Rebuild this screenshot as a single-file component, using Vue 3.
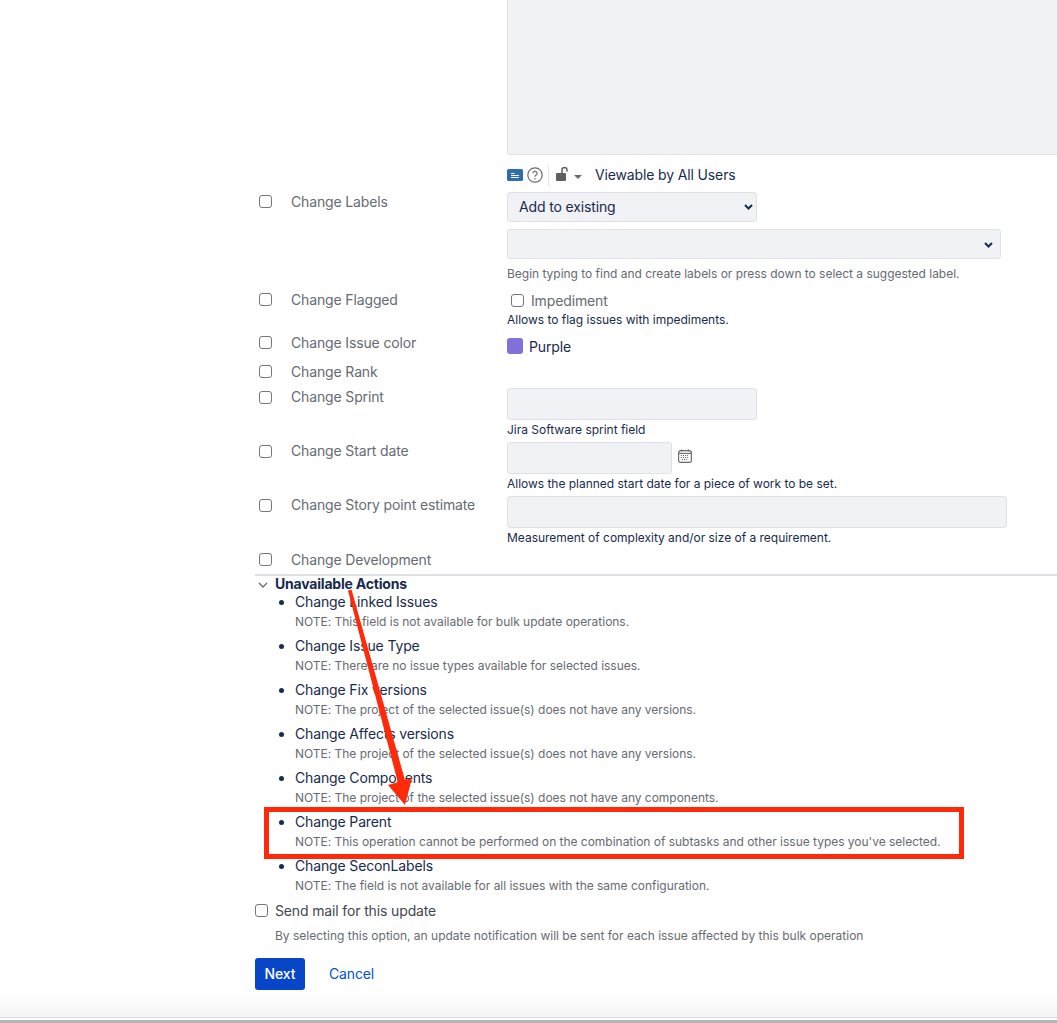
<script setup>
const unavailable = [
  ['Change Linked Issues', 'NOTE: This field is not available for bulk update operations.'],
  ['Change Issue Type', 'NOTE: There are no issue types available for selected issues.'],
  ['Change Fix versions', 'NOTE: The project of the selected issue(s) does not have any versions.'],
  ['Change Affects versions', 'NOTE: The project of the selected issue(s) does not have any versions.'],
  ['Change Components', 'NOTE: The project of the selected issue(s) does not have any components.'],
  ['Change Parent', "NOTE: This operation cannot be performed on the combination of subtasks and other issue types you've selected."],
  ['Change SeconLabels', 'NOTE: The field is not available for all issues with the same configuration.'],
]
</script>

<template>
  <div class="page">
    <div class="content">
      <div class="top">
        <div class="textarea"></div>
        <div class="viewer">
          <svg class="ic-blue" width="16" height="12" viewBox="0 0 16 12"><rect width="16" height="12" rx="1.5" fill="#2f6cb0"/><path d="M4 4.500h3.500M4 6.500h8M4 8.500h8" stroke="#fff" stroke-width="1"/></svg>
          <svg class="ic-help" width="16" height="16" viewBox="0 0 16 16"><circle cx="8" cy="8" r="7.2" fill="none" stroke="#6b6b6b" stroke-width="1.2"/><path d="M5.900 6.200a2.100 2.100 0 1 1 3.300 1.800c-.8.500-1.200.9-1.200 1.800" fill="none" stroke="#6b6b6b" stroke-width="1.2"/><circle cx="8" cy="11.800" r=".8" fill="#6b6b6b"/></svg>
          <span class="divider"></span>
          <svg class="ic-lock" width="14" height="14" viewBox="0 0 14 14"><rect x="0" y="6" width="10" height="8" rx="1" fill="#5f5f5f"/><path d="M6 6V3a2.500 2.500 0 0 1 5 0v1.500" fill="none" stroke="#5f5f5f" stroke-width="1.500"/></svg>
          <svg class="ic-caret" width="8" height="4" viewBox="0 0 8 4"><path d="M0 0h8L4 4z" fill="#6b6b6b"/></svg>
          <span class="viewer-text">Viewable by All Users</span>
        </div>
      </div>

      <div class="row r-labels">
        <label class="lbl"><input type="checkbox" class="cb" /><span>Change Labels</span></label>
        <div class="field">
          <div class="sel-wrap w250">
            <select class="sel"><option>Add to existing</option></select>
            <svg class="chev" width="9" height="6" viewBox="0 0 9 6"><path d="M1 1l3.500 3.500L8 1" fill="none" stroke="#172b4d" stroke-width="2"/></svg>
          </div>
          <div class="sel-wrap w494 second">
            <select class="sel"><option></option></select>
            <svg class="chev" width="9" height="6" viewBox="0 0 9 6"><path d="M1 1l3.500 3.500L8 1" fill="none" stroke="#172b4d" stroke-width="2"/></svg>
          </div>
          <div class="hint gray">Begin typing to find and create labels or press down to select a suggested label.</div>
        </div>
      </div>

      <div class="row r-flagged">
        <label class="lbl"><input type="checkbox" class="cb" /><span>Change Flagged</span></label>
        <div class="field f1">
          <label class="impediment"><input type="checkbox" class="cb" /><span>Impediment</span></label>
          <div class="hint h2">Allows to flag issues with impediments.</div>
        </div>
      </div>

      <div class="row r-color">
        <label class="lbl"><input type="checkbox" class="cb" /><span>Change Issue color</span></label>
        <div class="field f3 purple"><span class="swatch"></span><span>Purple</span></div>
      </div>

      <div class="row r-rank">
        <label class="lbl"><input type="checkbox" class="cb" /><span>Change Rank</span></label>
      </div>

      <div class="row r-sprint low">
        <label class="lbl"><input type="checkbox" class="cb" /><span>Change Sprint</span></label>
        <div class="field f1">
          <div class="inp w250"></div>
          <div class="hint h1">Jira Software sprint field</div>
        </div>
      </div>

      <div class="row r-date low">
        <label class="lbl"><input type="checkbox" class="cb" /><span>Change Start date</span></label>
        <div class="field f1">
          <div class="date-line">
            <div class="inp w165"></div>
            <svg class="cal" width="14" height="14" viewBox="0 0 14 14"><rect x=".6" y="1.600" width="12.800" height="11.800" rx="2.200" fill="#f7f7f7" stroke="#6b6b6b" stroke-width="1.100"/><path d="M.8 4.400h12.400" stroke="#6b6b6b" stroke-width="1.100"/><path d="M3.500 .5v2M10.500 .5v2" stroke="#6b6b6b" stroke-width="1.100"/><path d="M3 6.500h8M3 8.500h8M4 10.500h6" stroke="#6b6b6b" stroke-width="1" stroke-dasharray="1 1"/></svg>
          </div>
          <div class="hint h1">Allows the planned start date for a piece of work to be set.</div>
        </div>
      </div>

      <div class="row r-story low">
        <label class="lbl"><input type="checkbox" class="cb" /><span>Change Story point estimate</span></label>
        <div class="field f1">
          <div class="inp w500"></div>
          <div class="hint h1">Measurement of complexity and/or size of a requirement.</div>
        </div>
      </div>

      <div class="row r-dev">
        <label class="lbl"><input type="checkbox" class="cb" /><span>Change Development</span></label>
      </div>

      <div class="rule"></div>

      <div class="ua-head">
        <svg width="10" height="6" viewBox="0 0 10 6"><path d="M1 1l4 4 4-4" fill="none" stroke="#6b6b6b" stroke-width="1.400"/></svg>
        <span>Unavailable Actions</span>
      </div>
      <ul class="ua-list">
        <li v-for="item in unavailable" :key="item[0]">
          <div class="ua-title">{{ item[0] }}</div>
          <div class="ua-note">{{ item[1] }}</div>
        </li>
      </ul>

      <label class="mail"><input type="checkbox" class="cb" /><span>Send mail for this update</span></label>
      <div class="mail-note">By selecting this option, an update notification will be sent for each issue affected by this bulk operation</div>

      <div class="actions">
        <button class="next">Next</button>
        <a class="cancel">Cancel</a>
      </div>
    </div>

    <div class="footer"><div class="shade"></div><div class="bar"></div></div>

    <svg class="overlay" width="1057" height="1023" viewBox="0 0 1057 1023">
      <path d="M348 590.500L351.500 589.500L405.500 782L398.500 785z" fill="#ff2a0a"/>
      <path d="M388 785L412 778L405 805z" fill="#ff2a0a"/>
      <rect x="266.500" y="809.500" width="695" height="47" fill="none" stroke="#ff2a0a" stroke-width="5"/>
    </svg>
  </div>
</template>

<style scoped>
.page { position: relative; width: 1057px; height: 1023px; overflow: hidden; background: #fff; font-family: Inter, "Liberation Sans", sans-serif; font-size: 14px; letter-spacing: -0.14px; color: #172b4d; }
.content { padding-left: 255px; height: 990px; }
.top { margin-left: 252px; }
.textarea { width: 570px; height: 155px; box-sizing: border-box; background: #f1f2f5; border: 1px solid #dfe1e6; border-top: 0; border-radius: 0 0 0 3px; }
.viewer { display: flex; align-items: center; height: 21px; margin-top: 10px; }
.ic-blue { margin-top: -1px; }
.ic-help { margin-left: 4px; margin-top: -2px; }
.divider { width: 1px; height: 21px; background: #e6e6e6; margin-left: 5px; }
.ic-lock { margin-left: 7px; margin-top: -3px; }
.ic-caret { margin-left: 4px; margin-top: 3px; }
.viewer-text { margin-left: 13px; padding-bottom: 2px; }

.row { display: grid; grid-template-columns: 252px 1fr; }
.lbl { display: flex; align-items: center; height: 18px; padding-left: 4px; color: #666b73; }
.lbl span { margin-left: 19px; }
.cb { appearance: none; width: 13px; height: 13px; margin: 0; box-sizing: border-box; background: #fff; border: 1px solid #767676; border-radius: 3px; flex: none; }
.low .cb { margin-top: 2px; }
.r-labels { margin-top: 6px; }
.sel-wrap { position: relative; height: 30px; }
.sel { display: block; appearance: none; width: 100%; height: 100%; box-sizing: border-box; background-color: #f1f2f5; border: 1px solid #dfe1e6; border-radius: 3px; font: inherit; letter-spacing: inherit; color: inherit; padding: 0 0 2px 11px; }
.chev { position: absolute; right: 4px; top: 12px; pointer-events: none; }
.w494 .chev { right: 8px; top: 13px; }
.w250 { width: 250px; }
.w494 { width: 494px; }
.w165 { width: 165px; }
.w500 { width: 500px; }
.second { margin-top: 7px; }
.inp { height: 32px; box-sizing: border-box; background: #f1f2f5; border: 1px solid #dfe1e6; border-radius: 3px; }
.hint { font-size: 12px; line-height: 16px; letter-spacing: -0.02px; }
.gray { color: #666b73; margin-top: 7px; }
.h1 { margin-top: 2px; }
.h2 { margin-top: 3px; }
.r-flagged { margin-top: 8px; }
.f1 { padding-top: 1px; }
.f3 { padding-top: 3px; }
.impediment { display: flex; align-items: center; height: 18px; padding-left: 4px; color: #666b73; }
.impediment span { margin-left: 7px; }
.r-color { margin-top: 5px; height: 29px; }
.purple { display: flex; align-items: center; height: 20px; }
.swatch { width: 16px; height: 16px; border-radius: 3px; background: #8270db; margin-right: 6px; }
.r-rank { height: 20px; }
.r-sprint { margin-top: 5px; }
.r-date { margin-top: 3px; }
.date-line { display: flex; align-items: center; gap: 6px; }
.cal { margin-top: -5px; }
.r-story { margin-top: 3px; }
.r-dev { margin-top: 4px; height: 20px; }
.rule { height: 2px; background: #dfe1e6; margin-top: 4px; margin-right: -10px; }
.ua-head { display: flex; align-items: center; height: 16px; font-weight: 700; letter-spacing: -0.2px; padding-left: 3px; }
.ua-head span { margin-top: -2px; }
.ua-head svg { margin-right: 7px; margin-top: 2px; }
.ua-list { margin: 0; padding: 0 0 0 40px; }
.ua-list li { margin-bottom: 6px; }
.ua-list li:last-child { margin-bottom: 0; }
.ua-title { line-height: 20px; }
.ua-note { font-size: 12px; line-height: 16px; margin-top: 2px; letter-spacing: -0.02px; color: #666b73; }
.mail { display: flex; align-items: center; height: 20px; margin-top: 6px; color: #42474f; }
.mail span { margin-left: 7px; }
.mail-note { font-size: 12px; line-height: 16px; letter-spacing: 0; color: #666b73; margin: 8px 0 0 20px; }
.actions { display: flex; align-items: center; margin-top: 14px; }
.next { width: 50px; height: 32px; border: 0; border-radius: 3px; background: #0747c7; color: #fff; font: inherit; letter-spacing: inherit; font-weight: 500; padding: 0 0 2px; }
.cancel { margin-left: 24px; color: #0052cc; padding-bottom: 2px; }
.footer { height: 33px; display: flex; flex-direction: column; }
.shade { flex: 1; background: linear-gradient(#fff, #f5f5f5); border-bottom: 1px solid #dcdcdc; }
.bar { height: 3px; background: #b5b5b5; margin-top: 2px; }
.overlay { position: absolute; inset: 0; pointer-events: none; }
</style>
